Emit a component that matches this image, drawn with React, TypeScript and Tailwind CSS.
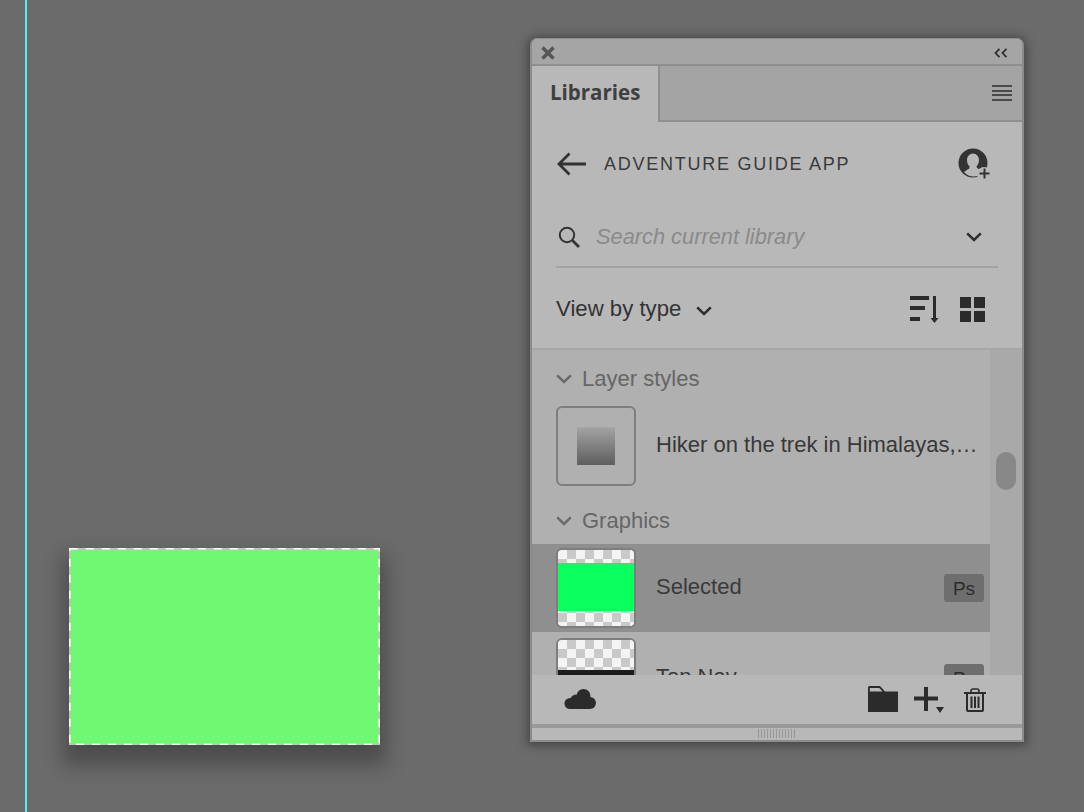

const sans = "font-['Liberation_Sans',Arial,sans-serif]";

function Chevron({ className }: { className: string }) {
  return (
    <svg viewBox="0 0 16 10" className={className} fill="none" stroke="currentColor" strokeWidth="2.6">
      <path d="M1.2 1.4 8 8 14.8 1.4" />
    </svg>
  );
}

function Thumb({ bottom }: { bottom: "green" | "black" }) {
  return (
    <div className="h-[80px] w-[80px] shrink-0 overflow-hidden rounded-[6px] border-2 border-[#7e7e7e] bg-[#f4f4f4]">
      <div className="flex h-full flex-col bg-[conic-gradient(#c9c9c9_25%,#f4f4f4_0_50%,#c9c9c9_0_75%,#f4f4f4_0)] bg-[length:18px_18px]">
        {bottom === "green" ? (
          <div className="mt-[13px] h-[48px] w-full bg-[#0bff5e]" />
        ) : (
          <div className="mt-[30px] h-[36px] w-full bg-[#1b1b1b]" />
        )}
      </div>
    </div>
  );
}

function SectionHead({ label, className }: { label: string; className: string }) {
  return (
    <div className={`flex items-center gap-[10px] pl-[24px] ${className}`}>
      <Chevron className="h-[10px] w-[16px] text-[#6a6a6a]" />
      <span className="text-[22px] leading-[26px] text-[#666666]">{label}</span>
    </div>
  );
}

function Badge() {
  return <span className="flex h-[28px] w-[40px] items-center justify-center rounded-[3px] bg-[#6e6e6e] pt-[2px] text-[19px] text-[#2c2c2c]">Ps</span>;
}

export default function App() {
  return (
    <div className={`relative h-[812px] w-[1084px] overflow-hidden bg-[#6b6b6b] ${sans}`}>
      <div className="absolute left-[25px] top-0 h-full w-[2px] bg-[#4ff0f2]" />

      <div className="absolute left-[69px] top-[548px] h-[197px] w-[311px] bg-[#70f872] shadow-[0_14px_18px_6px_rgba(40,40,40,0.45)]">
        <svg className="absolute inset-0 h-full w-full" viewBox="0 0 311 197" fill="none">
          <rect x="0.75" y="0.75" width="309.5" height="195.5" stroke="#c9bcc9" strokeWidth="1.5" />
          <rect x="0.75" y="0.75" width="309.5" height="195.5" stroke="#ffffff" strokeWidth="1.5" strokeDasharray="8 8" />
        </svg>
      </div>

      <div className="absolute left-[530px] top-[38px] flex h-[704px] w-[494px] flex-col overflow-hidden rounded-t-[7px] border-x-2 border-b-2 border-[#8c8c8c] border-t border-t-[#8d8d8d] bg-[#b8b8b8] shadow-[0_1px_8px_3px_rgba(40,40,40,0.5)]">
        {/* title bar */}
        <div className="flex h-[27px] shrink-0 items-center justify-between border-b-2 border-[#8f8f8f] bg-[#a5a5a5] pl-[9px] pr-[14px] pt-[2px]">
          <svg viewBox="0 0 14 14" className="h-[14px] w-[14px] text-[#555555]" stroke="currentColor" strokeWidth="3.4" fill="none">
            <path d="M1.5 1.5 12.5 12.5M12.5 1.5 1.5 12.5" />
          </svg>
          <svg viewBox="0 0 14 10" className="h-[10px] w-[14px] text-[#2e2e2e]" stroke="currentColor" strokeWidth="1.8" fill="none">
            <path d="M5.5 .8 1.5 5l4 4.2M12.5 .8 8.5 5l4 4.2" />
          </svg>
        </div>

        {/* tabs */}
        <div className="flex h-[56px] shrink-0">
          <div className="flex w-[128px] items-start border-r-2 border-[#8f8f8f] bg-[#b8b8b8] pl-[18px] pt-[12px]">
            <span className="font-['Open_Sans',sans-serif] text-[20.5px] font-bold leading-[28px] text-[#3f3f3f]">Libraries</span>
          </div>
          <div className="flex flex-1 items-center justify-end border-b-2 border-[#8f8f8f] bg-[#a4a4a4] pr-[10px]">
            <div className="flex w-[20px] flex-col gap-[2.5px]">
              <div className="h-[2px] bg-[#4a4a4a]" />
              <div className="h-[2px] bg-[#4a4a4a]" />
              <div className="h-[2px] bg-[#4a4a4a]" />
              <div className="h-[2px] bg-[#4a4a4a]" />
            </div>
          </div>
        </div>

        {/* header */}
        <div className="flex h-[228px] shrink-0 flex-col border-b-2 border-[#a6a6a6] px-[24px]">
          <div className="flex h-[84px] shrink-0 items-center">
            <svg viewBox="0 0 30 24" className="ml-[1px] h-[24px] w-[30px] text-[#333333]" stroke="currentColor" strokeWidth="2.8" fill="none">
              <path d="M29 12H3M12.5 1.5 2 12l10.5 10.5" />
            </svg>
            <span className="ml-[17px] text-[18px] leading-[24px] tracking-[1.75px] text-[#3a3a3a]">ADVENTURE GUIDE APP</span>
            <svg viewBox="0 0 32 32" className="ml-auto mr-[8px] h-[32px] w-[32px]">
              <circle cx="15" cy="15" r="14.5" fill="#333333" />
              <path d="M15 5.500c3.500 0 6 3 6 6.500 0 3-1.200 5-2.500 6.200 0 1.500 1 2.200 3 3l4.500 2A12.500 12.500 0 0 1 6 24l3.500-2.500c2-.8 2-1.800 2-3.300C10 17 9 15 9 12 9 8.500 11.500 5.500 15 5.500Z" fill="#b8b8b8" />
              <circle cx="26" cy="26" r="7" fill="#b8b8b8" />
              <path d="M26.500 20.500v10M21.500 25.500h10" stroke="#333333" strokeWidth="2" />
            </svg>
          </div>

          <div className="flex h-[62px] shrink-0 items-center border-b-2 border-[#a3a3a3] pl-[1px] pr-[16px] pt-[2px]">
            <svg viewBox="0 0 24 24" className="h-[24px] w-[24px] text-[#333333]" stroke="currentColor" fill="none">
              <circle cx="10" cy="10" r="7.2" strokeWidth="2" />
              <path d="m15.500 15.500 6.500 6.500" strokeWidth="2.600" />
            </svg>
            <span className="ml-[15px] text-[21.8px] italic leading-[26px] text-[#8a8a8a]">Search current library</span>
            <Chevron className="ml-auto h-[10px] w-[16px] text-[#2e2e2e]" />
          </div>

          <div className="flex flex-1 items-center pr-[13px] pt-[2px]">
            <span className="text-[22.2px] leading-[26px] text-[#333333]">View by type</span>
            <Chevron className="ml-[15px] mt-[3px] h-[10px] w-[16px] text-[#2e2e2e]" />
            <svg viewBox="0 0 30 28" className="ml-auto mr-[-1px] mt-[2px] h-[28px] w-[30px] text-[#2b2b2b]" fill="currentColor">
              <rect x="0" y="0" width="19" height="4" />
              <rect x="0" y="10" width="15" height="4" />
              <rect x="0" y="21" width="10" height="4" />
              <rect x="23" y="0" width="3" height="23" />
              <path d="M20.500 22h8l-4 5Z" />
            </svg>
            <div className="ml-[21px] grid grid-cols-[11px_11px] gap-[3px]">
              <div className="h-[11px] bg-[#2b2b2b]" />
              <div className="h-[11px] bg-[#2b2b2b]" />
              <div className="h-[11px] bg-[#2b2b2b]" />
              <div className="h-[11px] bg-[#2b2b2b]" />
            </div>
          </div>
        </div>

        {/* list */}
        <div className="flex min-h-0 flex-1">
          <div className="min-w-0 flex-1 overflow-hidden bg-[#b0b0b0]">
            <SectionHead label="Layer styles" className="h-[56px] pt-[2px]" />
            <div className="flex h-[80px] items-center pl-[24px] pr-[12px]">
              <div className="flex h-[80px] w-[80px] shrink-0 items-center justify-center rounded-[6px] border-2 border-[#7e7e7e]">
                <div className="h-[38px] w-[38px] bg-gradient-to-b from-[#a4a4a4] to-[#5f5f5f]" />
              </div>
              <span className="mb-[2px] ml-[20px] whitespace-nowrap text-[22px] leading-[26px] text-[#383838]">Hiker on the trek in Himalayas,…</span>
            </div>
            <SectionHead label="Graphics" className="h-[58px] pt-[12px]" />
            <div className="flex h-[88px] items-center bg-[#8f8f8f] pl-[24px] pr-[6px]">
              <Thumb bottom="green" />
              <span className="mb-[2px] ml-[20px] text-[22px] leading-[26px] text-[#3a3a3a]">Selected</span>
              <span className="ml-auto"><Badge /></span>
            </div>
            <div className="flex h-[88px] items-center pl-[24px] pr-[6px] pt-[4px]">
              <Thumb bottom="black" />
              <span className="mb-[2px] ml-[20px] text-[22px] leading-[26px] text-[#3a3a3a]">Top Nav</span>
              <span className="ml-auto"><Badge /></span>
            </div>
          </div>
          <div className="w-[32px] shrink-0 bg-[#a9a9a9] pl-[6px] pt-[102px]">
            <div className="h-[38px] w-[20px] rounded-full bg-[#888888]" />
          </div>
        </div>

        {/* footer */}
        <div className="flex h-[49px] shrink-0 items-center bg-[#b8b8b8] pl-[32px] pr-[36px]">
          <svg viewBox="0 0 32 21" className="h-[21px] w-[32px] text-[#2b2b2b]" fill="currentColor">
            <circle cx="6" cy="14.500" r="5.500" />
            <circle cx="12" cy="11" r="5.500" />
            <circle cx="19.500" cy="7" r="7" />
            <circle cx="26" cy="14" r="6" />
            <rect x="6" y="11" width="20" height="9" />
          </svg>
          <svg viewBox="0 0 30 26" className="ml-auto mb-[2px] mr-[1px] h-[26px] w-[30px] text-[#2b2b2b]" fill="currentColor">
            <path d="M0 8V1.500Q0 0 1.500 0H12l5 5.500h13V26H0Z" />
            <path d="M1.800 5.500V2h9.500l3.300 3.500Z" fill="#b8b8b8" />
          </svg>
          <svg viewBox="0 0 32 26" className="ml-[15px] h-[26px] w-[32px] text-[#2b2b2b]" fill="currentColor">
            <rect x="0" y="9.500" width="24" height="4" />
            <rect x="10" y="0" width="4" height="24" />
            <path d="M22 20h8l-4 6Z" />
          </svg>
          <svg viewBox="0 0 22 24" className="ml-[18px] h-[24px] w-[22px] text-[#2b2b2b]" fill="none" stroke="currentColor" strokeWidth="2">
            <path d="M0 5h22" />
            <path d="M7 5V3q0-2 2-2h4q2 0 2 2v2" strokeWidth="1.600" />
            <path d="M3 5v17q0 1 1 1h14q1 0 1-1V5" />
            <path d="M7.500 8.500V20M11 8.500V20M14.500 8.500V20" />
          </svg>
        </div>

        {/* resize strip */}
        <div className="flex h-[16px] shrink-0 flex-col">
          <div className="h-[4px] bg-[#9a9a9a]" />
          <div className="flex flex-1 justify-center bg-[#b8b8b8] pt-[1px]">
            <div className="h-[9px] w-[38px] bg-[repeating-linear-gradient(90deg,#969696_0_1px,transparent_1px_3px)]" />
          </div>
        </div>
      </div>
    </div>
  );
}
